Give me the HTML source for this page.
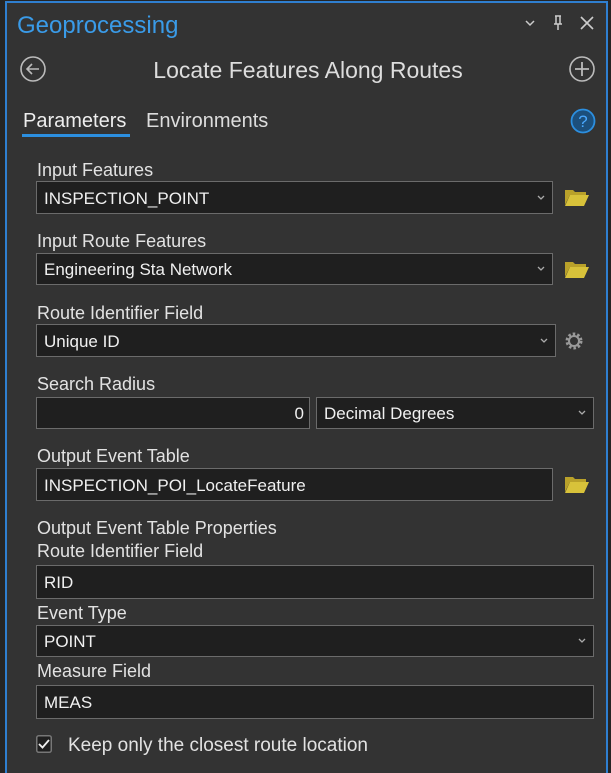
<!DOCTYPE html><html><head><style>
body{margin:0;width:611px;height:766px;background:#252525;position:relative;overflow:hidden;font-family:"Liberation Sans",sans-serif;color:#e6e6e6}
.p{position:absolute;left:5px;top:1px;width:599px;height:770px;border:2px solid #2f7fd0;background:#333;border-bottom:none}
.a{position:absolute;white-space:nowrap}
.l{font-size:18px;color:#e2e2e2}
.b{position:absolute;background:#1f1f1f;border:1.5px solid #6b6b6b;box-sizing:border-box;font-size:17px;color:#f0f0f0;padding-left:7px;padding-top:2px;display:flex;align-items:center}
.c{position:absolute;right:6px;top:50%;margin-top:-5px}
</style></head><body>
<div class="p"></div>
<div class="a" style="left:17px;top:12px;font-size:24px;color:#3a9be8">Geoprocessing</div>
<svg class="a" style="left:524px;top:18px" width="12" height="10"><path d="M2 3l4 4 4-4" stroke="#ccc" stroke-width="1.5" fill="none"/></svg>
<svg class="a" style="left:551px;top:14px" width="14" height="18"><path d="M4 2h6M5 2v8M9 2v8M3 10h8M7 10v6" stroke="#ccc" stroke-width="1.5" fill="none"/></svg>
<svg class="a" style="left:579px;top:15px" width="16" height="16"><path d="M2 2l12 12M14 2L2 14" stroke="#ccc" stroke-width="1.6"/></svg>
<svg class="a" style="left:19px;top:55px" width="28" height="28"><circle cx="14" cy="14" r="12" stroke="#bbb" stroke-width="1.6" fill="none"/><path d="M20 14H8M13 9l-5 5 5 5" stroke="#bbb" stroke-width="1.6" fill="none"/></svg>
<div class="a" style="left:0;width:616px;text-align:center;top:57px;font-size:23px;color:#ddd">Locate Features Along Routes</div>
<svg class="a" style="left:568px;top:55px" width="28" height="28"><circle cx="14" cy="14" r="12" stroke="#bbb" stroke-width="1.6" fill="none"/><path d="M14 7v14M7 14h14" stroke="#bbb" stroke-width="1.8"/></svg>
<div class="a" style="left:23px;top:110px;font-size:20px;color:#eee">Parameters</div>
<div class="a" style="left:22px;top:134px;width:108px;height:3px;background:#2c8fe0"></div>
<div class="a" style="left:146px;top:110px;font-size:20px;color:#ddd">Environments</div>
<svg class="a" style="left:570px;top:108px" width="26" height="26"><circle cx="13" cy="13" r="11.5" fill="#1c4f7c" stroke="#2c8fe0" stroke-width="1.8"/><text x="13" y="19" font-size="17" fill="#4aa8ff" text-anchor="middle" font-family="Liberation Sans">?</text></svg>

<div class="a l" style="left:37px;top:160px">Input Features</div>
<div class="b" style="left:36px;top:181px;width:517px;height:33px">INSPECTION_POINT<svg class="c" width="10" height="10"><path d="M2 3l3 3 3-3" stroke="#aaa" stroke-width="1.3" fill="none"/></svg></div>
<svg class="a" style="left:564px;top:187px" width="26" height="20"><path d="M1 3h8l2 2h11v3H6L1 18z" fill="#b9a12a"/><path d="M6 8h19l-5 11H1z" fill="#d8c23a"/></svg>

<div class="a l" style="left:37px;top:231px">Input Route Features</div>
<div class="b" style="left:36px;top:253px;width:517px;height:32px">Engineering Sta Network<svg class="c" width="10" height="10"><path d="M2 3l3 3 3-3" stroke="#aaa" stroke-width="1.3" fill="none"/></svg></div>
<svg class="a" style="left:564px;top:259px" width="26" height="20"><path d="M1 3h8l2 2h11v3H6L1 18z" fill="#b9a12a"/><path d="M6 8h19l-5 11H1z" fill="#d8c23a"/></svg>

<div class="a l" style="left:37px;top:303px">Route Identifier Field</div>
<div class="b" style="left:36px;top:324px;width:520px;height:33px">Unique ID<svg class="c" width="10" height="10"><path d="M2 3l3 3 3-3" stroke="#aaa" stroke-width="1.3" fill="none"/></svg></div>
<svg class="a" style="left:562px;top:329px" width="24" height="24"><circle cx="12" cy="12" r="7" fill="none" stroke="#999" stroke-width="3" stroke-dasharray="2.5 2"/><circle cx="12" cy="12" r="5" fill="none" stroke="#999" stroke-width="2"/></svg>

<div class="a l" style="left:37px;top:374px">Search Radius</div>
<div class="b" style="left:36px;top:397px;width:274px;height:32px;justify-content:flex-end;padding-right:5px">0</div>
<div class="b" style="left:316px;top:397px;width:278px;height:32px">Decimal Degrees<svg class="c" width="10" height="10"><path d="M2 3l3 3 3-3" stroke="#aaa" stroke-width="1.3" fill="none"/></svg></div>

<div class="a l" style="left:37px;top:446px">Output Event Table</div>
<div class="b" style="left:36px;top:468px;width:517px;height:33px">INSPECTION_POI_LocateFeature</div>
<svg class="a" style="left:564px;top:474px" width="26" height="20"><path d="M1 3h8l2 2h11v3H6L1 18z" fill="#b9a12a"/><path d="M6 8h19l-5 11H1z" fill="#d8c23a"/></svg>

<div class="a l" style="left:37px;top:518px">Output Event Table Properties</div>
<div class="a l" style="left:37px;top:541px">Route Identifier Field</div>
<div class="b" style="left:36px;top:565px;width:558px;height:34px">RID</div>
<div class="a l" style="left:37px;top:603px">Event Type</div>
<div class="b" style="left:36px;top:625px;width:558px;height:32px">POINT<svg class="c" width="10" height="10"><path d="M2 3l3 3 3-3" stroke="#aaa" stroke-width="1.3" fill="none"/></svg></div>
<div class="a l" style="left:37px;top:661px">Measure Field</div>
<div class="b" style="left:36px;top:685px;width:558px;height:34px">MEAS</div>
<svg class="a" style="left:36px;top:735px" width="16" height="18"><rect x="0.75" y="0.75" width="14.5" height="16.5" rx="2" fill="#1f1f1f" stroke="#777" stroke-width="1.5"/><path d="M3 9l3.5 3.5L13 5" stroke="#eee" stroke-width="1.8" fill="none"/></svg>
<div class="a l" style="left:68px;top:735px;font-size:19px">Keep only the closest route location</div>
</body></html>
